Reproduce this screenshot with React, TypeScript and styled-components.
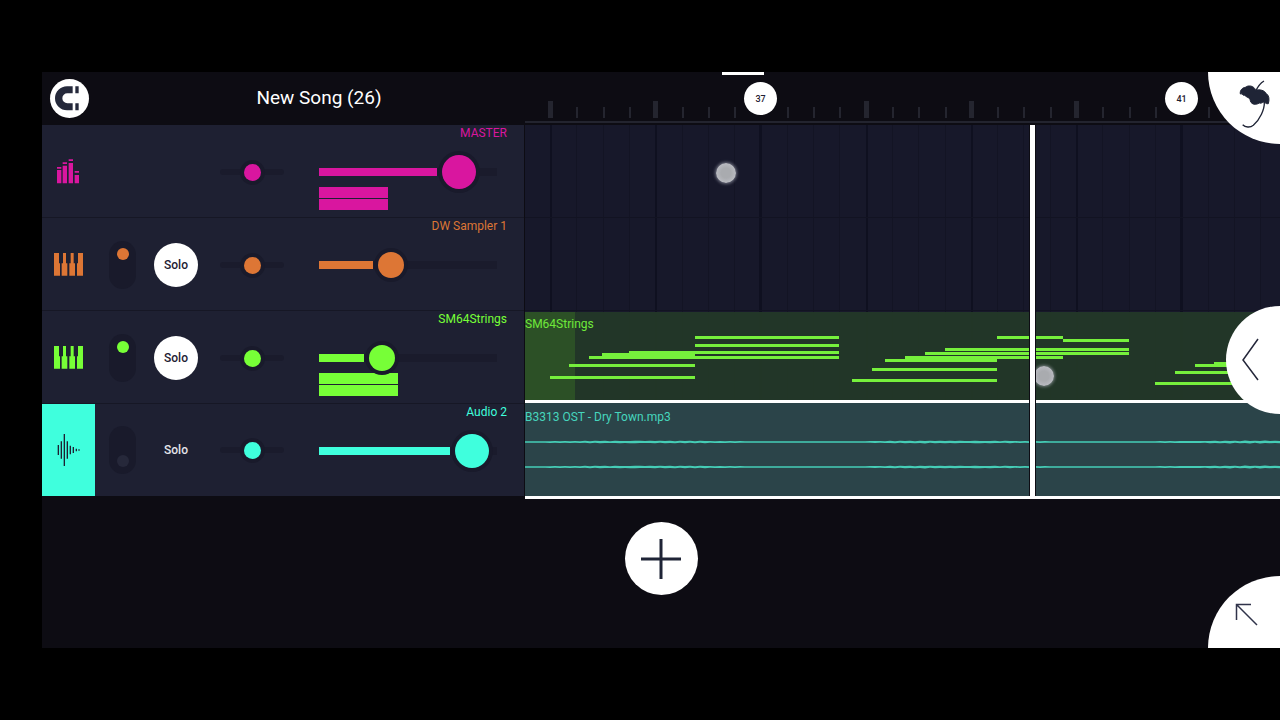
import React, { useState } from 'react';
import styled, { createGlobalStyle } from 'styled-components';

const ink = '#1e2032';
const shade = '#191a2b';

const GlobalStyle = createGlobalStyle`
  * { box-sizing: border-box; }
  body { margin: 0; background: #000; font-family: Roboto, "Liberation Sans", sans-serif; }
  button { font: inherit; border: 0; padding: 0; cursor: pointer; }
`;

const Page = styled.div`
  min-height: 100vh;
  padding: 72px 0 72px 42px;
  display: flex;
  background: #000;
`;

const Studio = styled.main`
  position: relative;
  flex: 1;
  min-width: 0;
  overflow: hidden;
  background: #0d0c13;
`;

const Header = styled.header`
  display: grid;
  grid-template-columns: 483px minmax(0, 1fr);
  height: 53px;
`;

const SongBar = styled.div`
  display: flex;
  align-items: center;
  padding: 0 0 0 8px;
`;

const MagnetButton = styled.button`
  width: 39px;
  height: 39px;
  border-radius: 50%;
  background: #fff;
  display: grid;
  place-items: center;
`;

const SongTitle = styled.h1`
  flex: 1;
  margin: 0;
  padding: 0 1px 2px 25px;
  text-align: center;
  font-size: 19px;
  line-height: 24px;
  font-weight: 400;
  color: #fff;
`;

const Ruler = styled.div`
  position: relative;
  overflow: hidden;
  height: 51px;
  border-bottom: 2px solid #23242f;
`;

const RulerTicks = styled.svg`
  display: block;
  width: 100%;
  height: 49px;
`;

const ScrollHandle = styled.div`
  position: absolute;
  top: 0;
  left: 197px;
  width: 42px;
  height: 3px;
  background: #fff;
`;

const BarMarker = styled.button<{ $x: number }>`
  position: absolute;
  top: 10px;
  left: ${(p) => p.$x - 16}px;
  width: 33px;
  height: 33px;
  border-radius: 50%;
  background: #fff;
  color: ${ink};
  font-size: 9px;
  font-weight: 500;
`;

const Workspace = styled.div`
  display: grid;
  grid-template-columns: 482px minmax(0, 1fr);
  column-gap: 1px;
`;

const TrackList = styled.section`
  display: flex;
  flex-direction: column;
`;

const TrackRow = styled.div`
  height: 93px;
  display: grid;
  grid-template-columns: 53px 55px 52px 100px minmax(0, 1fr);
  align-items: center;
  justify-items: center;
  background: ${ink};
  box-shadow: inset 0 -1px #161725;
  &:last-child { height: 92px; box-shadow: none; }
`;

const TrackIcon = styled.button<{ $color: string; $selected: boolean }>`
  width: 100%;
  height: 100%;
  display: grid;
  place-items: center;
  color: ${(p) => (p.$selected ? ink : p.$color)};
  background: ${(p) => (p.$selected ? p.$color : 'transparent')};
`;

const MuteSwitch = styled.input<{ $color: string }>`
  appearance: none;
  width: 27px;
  height: 48px;
  margin: 0;
  padding: 7px 0;
  border-radius: 14px;
  background: ${shade};
  display: flex;
  justify-content: center;
  align-items: flex-end;
  cursor: pointer;
  &::before {
    content: '';
    width: 12px;
    height: 12px;
    border-radius: 50%;
    background: #26283a;
  }
  &:checked { align-items: flex-start; }
  &:checked::before { background: ${(p) => p.$color}; }
`;

const SoloButton = styled.button<{ $on: boolean }>`
  width: 44px;
  height: 44px;
  border-radius: 50%;
  font-size: 12px;
  font-weight: 500;
  line-height: 16px;
  background: ${(p) => (p.$on ? '#fff' : 'transparent')};
  color: ${(p) => (p.$on ? ink : '#e4e4ea')};
`;

const PanSlider = styled.input<{ $color: string }>`
  appearance: none;
  width: 64px;
  height: 18px;
  margin: 0;
  background: transparent;
  &::-webkit-slider-runnable-track {
    height: 6px;
    border-radius: 3px;
    background: #1a1b2c;
  }
  &::-webkit-slider-thumb {
    appearance: none;
    width: 17px;
    height: 17px;
    margin-top: -5px;
    border-radius: 50%;
    background: ${(p) => p.$color};
    box-shadow: 0 0 0 4px ${shade};
  }
`;

const LevelCell = styled.div`
  align-self: stretch;
  justify-self: stretch;
  display: flex;
  flex-direction: column;
  align-items: flex-start;
  padding: 0 17px;
`;

const TrackName = styled.span<{ $color: string }>`
  align-self: flex-end;
  margin-bottom: 15px;
  font-size: 12px;
  line-height: 16px;
  color: ${(p) => p.$color};
`;

const VolumeSlider = styled.input<{ $color: string; $thumb: number }>`
  appearance: none;
  position: relative;
  z-index: 1;
  width: 178px;
  height: 31px;
  margin: 0;
  background: transparent;
  &::-webkit-slider-runnable-track {
    height: 8px;
    background: linear-gradient(
      to right,
      ${(p) => p.$color} calc(var(--level) * (100% - ${(p) => p.$thumb}px) - 5px),
      #1a1b2c calc(var(--level) * (100% - ${(p) => p.$thumb}px) - 5px)
    );
  }
  &::-webkit-slider-thumb {
    appearance: none;
    width: ${(p) => p.$thumb}px;
    height: ${(p) => p.$thumb}px;
    margin-top: ${(p) => 4 - p.$thumb / 2}px;
    border-radius: 50%;
    background: ${(p) => p.$color};
    box-shadow: 0 0 0 4px ${shade};
  }
`;

const Meter = styled.div<{ $color: string; $width: number }>`
  display: grid;
  row-gap: 1px;
  width: ${(p) => p.$width}px;
  height: 23px;
  &::before, &::after { content: ''; background: ${(p) => p.$color}; }
`;

const Timeline = styled.section`
  position: relative;
  height: 371px;
  overflow: visible;
  background: #17182a;
`;

const GridLines = styled.svg`
  display: block;
  width: 100%;
  height: 371px;
`;

const Clip = styled.div<{ $lane: number; $selected?: boolean; $color: string; $fill: string }>`
  position: absolute;
  left: 0;
  right: 0;
  top: ${(p) => p.$lane * 93 + (p.$selected ? -4 : 1)}px;
  height: ${(p) => (p.$selected ? 99 : 90)}px;
  border: solid #fff;
  border-width: ${(p) => (p.$selected ? '3px 0' : '0')};
  background: ${(p) => p.$fill};
  color: ${(p) => p.$color};
  overflow: hidden;
`;

const ClipName = styled.span<{ $top: number }>`
  position: absolute;
  left: 0;
  top: ${(p) => p.$top}px;
  font-size: 12px;
  line-height: 16px;
`;

const ClipDrawing = styled.svg`
  display: block;
  width: 100%;
  height: 100%;
`;

const Playhead = styled.div`
  position: absolute;
  top: 0;
  bottom: 0;
  left: 504px;
  width: 7px;
  border: solid #0d0c13;
  border-width: 0 1px;
  background: #fff;
`;

const TouchPoint = styled.div<{ $x: number; $y: number }>`
  position: absolute;
  left: ${(p) => p.$x - 10}px;
  top: ${(p) => p.$y - 10}px;
  width: 20px;
  height: 20px;
  border-radius: 50%;
  background: radial-gradient(circle, #a9abaf 35%, #c3c4cc 90%);
  box-shadow: 0 0 3px 1px rgba(190, 192, 205, 0.5);
`;

const AddButton = styled.button`
  display: grid;
  place-items: center;
  width: 73px;
  height: 73px;
  margin: 26px auto;
  border-radius: 50%;
  background: #fff;
`;

const CornerButton = styled.button<{ $edge: 'top' | 'bottom' }>`
  position: absolute;
  right: 0;
  ${(p) => p.$edge}: 0;
  width: 72px;
  height: 72px;
  border-radius: ${(p) => (p.$edge === 'top' ? '0 0 0 72px' : '72px 0 0 0')};
  background: #fff;
`;

const DrawerButton = styled.button`
  position: absolute;
  right: 0;
  top: calc(50% - 54px);
  width: 54px;
  height: 108px;
  border-radius: 54px 0 0 54px;
  background: #fff;
`;

const ButtonArt = styled.svg`
  display: block;
  width: 100%;
  height: 100%;
`;

type IconKind = 'mixer' | 'keys' | 'audio';

type Track = {
  name: string;
  icon: IconKind;
  color: string;
  volume: number;
  thumb: number;
  meter?: number;
  channel?: { active: boolean; solo: boolean };
};

const tracks: Track[] = [
  { name: 'MASTER', icon: 'mixer', color: '#d9169f', volume: 0.857, thumb: 34, meter: 69 },
  { name: 'DW Sampler 1', icon: 'keys', color: '#dd7635', volume: 0.386, thumb: 26, channel: { active: true, solo: true } },
  { name: 'SM64Strings', icon: 'keys', color: '#77ff37', volume: 0.328, thumb: 26, meter: 79, channel: { active: true, solo: true } },
  { name: 'Audio 2', icon: 'audio', color: '#3fffdd', volume: 0.944, thumb: 34, channel: { active: false, solo: false } },
];

function Icon({ kind }: { kind: IconKind }) {
  if (kind === 'mixer') {
    return (
      <svg width="23" height="25" viewBox="0 0 69 75" fill="currentColor" aria-hidden="true">
        <path d="M0 33h13v40H0zM17 20h13v53H17zM35 12h13v61H35zM53 48h13v25H53z" />
        <path d="M0 24h13v5H0zM17 10h13v5H17zM35 1h13v5H35zM53 36h13v5H53z" />
      </svg>
    );
  }
  if (kind === 'keys') {
    return (
      <svg width="29" height="23" viewBox="0 0 87 69" fill="currentColor" aria-hidden="true">
        <path d="M0 0h15v31h3v37H0zM27 0h9v31h4v37H23V31h4zM50 0h9v31h4v37H46V31h4zM72 0h15v68H69V31h3z" />
      </svg>
    );
  }
  return (
    <svg width="23" height="32" viewBox="0 0 69 96" stroke="currentColor" strokeWidth="4" aria-hidden="true">
      <path d="M4 33v30M13 22v52M22 0v96M31 22v52M40 35v26M49 39v18M58 44v8M66 46v4" fill="none" />
    </svg>
  );
}

function TrackControls({ track, selected, onSelect }: { track: Track; selected: boolean; onSelect: () => void }) {
  const [volume, setVolume] = useState(track.volume);
  const [active, setActive] = useState(track.channel?.active ?? true);
  const [solo, setSolo] = useState(track.channel?.solo ?? false);
  return (
    <TrackRow>
      <TrackIcon $color={track.color} $selected={selected} onClick={onSelect} aria-label={`Select ${track.name}`}>
        <Icon kind={track.icon} />
      </TrackIcon>
      {track.channel ? (
        <MuteSwitch
          type="checkbox"
          $color={track.color}
          checked={active}
          onChange={(e) => setActive(e.target.checked)}
          aria-label={`${track.name} active`}
        />
      ) : <span />}
      {track.channel ? (
        <SoloButton $on={solo} aria-pressed={solo} onClick={() => setSolo(!solo)}>Solo</SoloButton>
      ) : <span />}
      <PanSlider type="range" min="-50" max="50" defaultValue="0" $color={track.color} aria-label={`${track.name} pan`} />
      <LevelCell>
        <TrackName $color={track.color}>{track.name}</TrackName>
        <VolumeSlider
          type="range"
          min="0"
          max="1"
          step="0.001"
          value={volume}
          onChange={(e) => setVolume(Number(e.target.value))}
          $color={track.color}
          $thumb={track.thumb}
          style={{ '--level': volume } as React.CSSProperties}
          aria-label={`${track.name} volume`}
        />
        {track.meter && <Meter $color={track.color} $width={track.meter} />}
      </LevelCell>
    </TrackRow>
  );
}

/* One bar of the song is 105.2px wide and holds four beats. */
const barWidth = 105.2;
const beats = Array.from({ length: 160 }, (_, i) => ({
  x: Math.round(25 + (i * barWidth) / 4),
  bar: i % 4 === 0,
  phrase: i % 16 === 8,
}));

/* Notes of the strings clip: start, end, vertical place. */
const notes = [
  [25, 170, 65], [44, 170, 53], [64, 314, 45], [77, 170, 42], [104, 314, 40], [170, 314, 33], [170, 314, 25],
  [327, 472, 68], [347, 472, 57], [360, 472, 48], [380, 538, 45], [400, 604, 41], [420, 604, 37],
  [472, 538, 25], [538, 604, 28],
  [630, 775, 71], [650, 775, 60], [670, 775, 53], [689, 775, 51],
];

function waveform(y: number) {
  const top: string[] = [];
  const bottom: string[] = [];
  for (let x = 0; x <= 2400; x += 5) {
    const swell = 0.5 + 0.5 * Math.sin(x / 48 - 1);
    const grain = Math.abs(Math.sin(x * 1.7));
    const half = 0.7 + swell * (0.3 + grain * 0.2);
    const drift = swell * Math.sin(x * 0.6) * 0.25;
    top.push(`${x} ${(y - half + drift).toFixed(2)}`);
    bottom.unshift(`${x} ${(y + half + drift).toFixed(2)}`);
  }
  return `M${top.concat(bottom).join('L')}Z`;
}

export default function App() {
  const [selected, setSelected] = useState(3);
  return (
    <Page>
      <GlobalStyle />
      <Studio>
        <Header>
          <SongBar>
            <MagnetButton aria-label="Snap to grid">
              <svg width="39" height="39" viewBox="0 0 117 117" fill="#25293b" aria-hidden="true">
                <path d="M68 22H51a36 36 0 0 0 0 72H68V73H52a15 15 0 0 1 0-30H68zM76 22h10v21H76zM76 73h10v21H76z" />
              </svg>
            </MagnetButton>
            <SongTitle>New Song (26)</SongTitle>
          </SongBar>
          <Ruler>
            <RulerTicks aria-hidden="true">
              {beats.filter((b) => !b.phrase).map((b) => (
                <rect
                  key={b.x}
                  x={b.bar ? b.x - 2 : b.x}
                  y={b.bar ? 29 : 35}
                  width={b.bar ? 5 : 2}
                  height={b.bar ? 17 : 11}
                  fill="#24252f"
                />
              ))}
            </RulerTicks>
            <ScrollHandle />
            <BarMarker $x={235}>37</BarMarker>
            <BarMarker $x={656}>41</BarMarker>
          </Ruler>
        </Header>
        <Workspace>
          <TrackList>
            {tracks.map((t, i) => (
              <TrackControls key={t.name} track={t} selected={selected === i} onSelect={() => setSelected(i)} />
            ))}
          </TrackList>
          <Timeline>
            <GridLines aria-hidden="true">
              {beats.map((b) => (
                <rect
                  key={b.x}
                  x={b.phrase ? b.x - 1 : b.x}
                  y="0"
                  width={b.phrase ? 3 : b.bar ? 2 : 1}
                  height="371"
                  fill={b.bar ? '#0f1020' : '#131424'}
                />
              ))}
              <path d="M0 92.5H4000M0 185.5H4000" stroke="#121322" />
            </GridLines>
            <TouchPoint $x={201} $y={48} />
            <Clip $lane={2} $color="#6fe93a" $fill="rgba(36, 58, 40, 0.92)">
              <ClipDrawing aria-hidden="true">
                <rect width="50" height="90" fill="#2c5026" />
                {notes.map(([from, to, y]) => (
                  <rect key={`${from}-${y}`} x={from} y={y - 1} width={to - from} height="3" fill="#76f03c" />
                ))}
              </ClipDrawing>
              <ClipName $top={4}>SM64Strings</ClipName>
            </Clip>
            <Clip $lane={3} $selected $color="#46d6bd" $fill="#2b4449">
              <ClipDrawing aria-hidden="true">
                <path d={waveform(39)} fill="#45cdb6" />
                <path d={waveform(64)} fill="#45cdb6" />
              </ClipDrawing>
              <ClipName $top={6}>B3313 OST - Dry Town.mp3</ClipName>
            </Clip>
            <TouchPoint $x={519} $y={251} />
            <Playhead />
          </Timeline>
        </Workspace>
        <AddButton aria-label="Add track">
          <svg width="40" height="40" viewBox="0 0 40 40" stroke="#1f2436" strokeWidth="3" aria-hidden="true">
            <path d="M20 0v40M0 20h40" />
          </svg>
        </AddButton>
        <CornerButton $edge="top" aria-label="Main menu">
          <ButtonArt viewBox="-66 -12 216 216" aria-hidden="true">
            <path
              d="M31 54C29 42 38 35 46 34C54 27 72 28 77 43C88 39 104 43 109 53C117 58 119 70 115 83C110 84 107 82 104 79C99 76 95 84 88 81C80 86 70 86 66 82C60 79 62 70 57 66C52 65 50 61 46 60C44 54 40 62 37 54C34 53 33 54 31 54Z"
              fill="#1f2436"
              stroke="#1f2436"
              strokeWidth="3"
              strokeLinejoin="round"
            />
            <path d="M77 46C83 32 90 22 102 15M103 78C104 100 90 130 70 148C60 156 46 154 38 146" fill="none" stroke="#1f2436" strokeWidth="4" />
          </ButtonArt>
        </CornerButton>
        <DrawerButton aria-label="Open drawer">
          <ButtonArt viewBox="0 0 54 108" fill="none" stroke="#24273a" strokeWidth="1.5" aria-hidden="true">
            <path d="M32 33L17 54L32 74" />
          </ButtonArt>
        </DrawerButton>
        <CornerButton $edge="bottom" aria-label="Expand view">
          <ButtonArt viewBox="0 0 72 72" fill="none" stroke="#30334a" strokeWidth="1.5" aria-hidden="true">
            <path d="M43 28.5H28.5V44M28.5 28.5L49 49" />
          </ButtonArt>
        </CornerButton>
      </Studio>
    </Page>
  );
}
